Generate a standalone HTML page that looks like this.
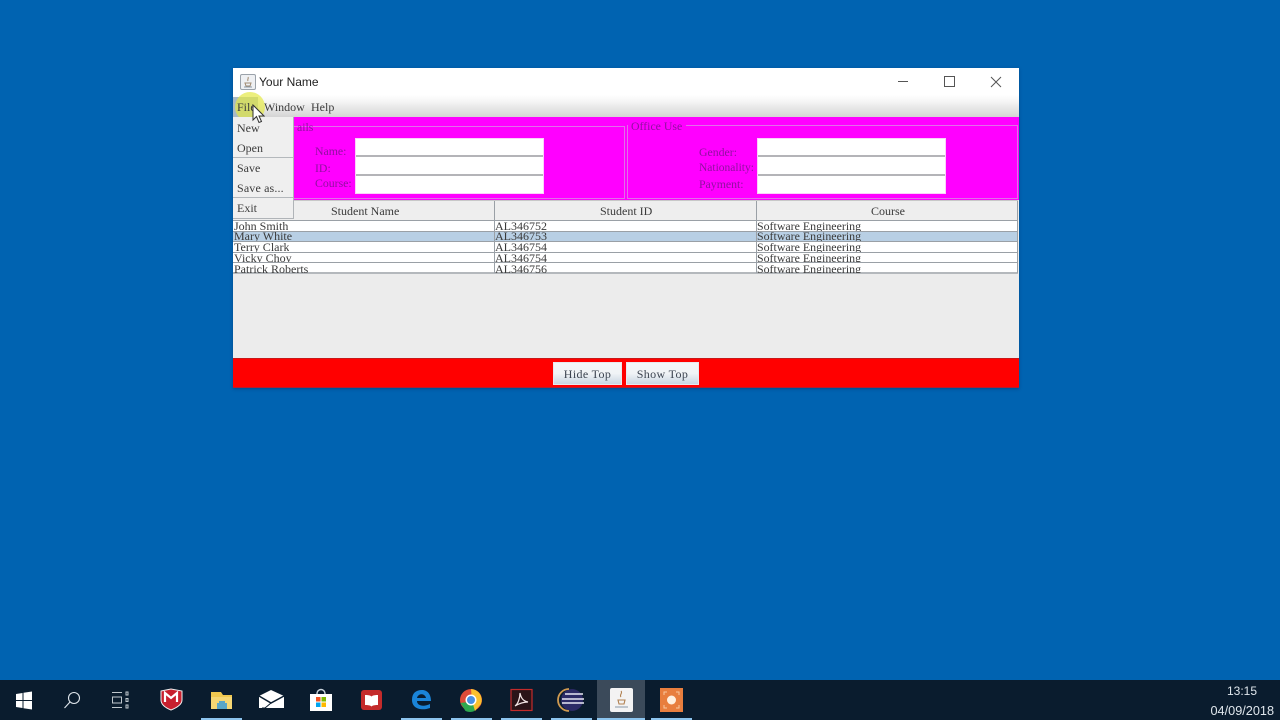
<!DOCTYPE html>
<html><head><meta charset="utf-8"><style>
html,body{margin:0;padding:0;width:1280px;height:720px;overflow:hidden;background:#0063b1}
div{position:absolute;box-sizing:border-box}
.t{font:12px/12px "Liberation Serif",serif;color:#3a3a3a;white-space:nowrap;filter:blur(.25px)}
.c{overflow:hidden}
.m{font:12px/12px "Liberation Serif",serif;color:#3c3c3c;white-space:nowrap;filter:blur(.25px)}
.p{color:#9010a0;font-size:11.800px}
.f{background:#fff;border:1px solid #fbd0fb}
.b{background:#b4b4b8;height:2px}
.r{height:1px;background:#9aa0a6}
.v{width:1px;background:#9aa0a6}
.btn{background:linear-gradient(#f4f6f8,#f0f3f6 50%,#c9d6e2);border:1px solid #e8e8ee;font:12px/22px "Liberation Serif",serif;color:#3c4450;text-align:center;letter-spacing:.35px;filter:blur(.2px)}
svg{position:absolute}
</style></head><body>
<div style="left:233px;top:68px;width:786px;height:320px;background:#ececec;box-shadow:0 1px 3px rgba(0,30,70,.35)"></div>
<div style="left:233px;top:68px;width:786px;height:49px;background:linear-gradient(#fff 0,#fff 27px,#f6f6f6 33px,#d4d4d4 49px)"></div>
<svg style="left:240px;top:74px" width="16" height="16" viewBox="0 0 16 16"><rect x=".5" y=".5" width="15" height="15" rx="1.500" fill="#eef0f3" stroke="#9aa2aa"/><path d="M8 3c1 1.500-1 2 0 4M5 9h6l-1 3H6z" fill="none" stroke="#a08a70"/><path d="M4 13h8" stroke="#8a9aaa"/></svg>
<div class="t" style="left:259px;top:76px;font:12px/13px 'Liberation Sans',sans-serif;color:#222">Your Name</div>
<svg style="left:890px;top:72px" width="120" height="20" viewBox="0 0 120 20" fill="none" stroke="#555" stroke-width="1"><path d="M8 9.500h10"/><rect x="54.500" y="4.500" width="10" height="10"/><path d="M101 5l10 10M111 5l-10 10"/></svg>
<div style="left:233px;top:97px;width:25px;height:20px;background:#a9bac6"></div>
<div style="left:235px;top:92px;width:30px;height:30px;border-radius:50%;background:rgba(228,232,70,.7)"></div>
<div class="m" style="left:237px;top:101px">File</div>
<div class="m" style="left:264px;top:101px">Window</div>
<div class="m" style="left:311px;top:101px">Help</div>

<div style="left:233px;top:117px;width:786px;height:83px;background:#ff00ff"></div>
<div style="left:233px;top:126px;width:392px;height:73px;border:1px solid #e070e8"></div>
<div style="left:627px;top:125px;width:391px;height:74px;border:1px solid #e070e8"></div>
<div style="left:628px;top:120px;width:58px;height:12px;background:#ff00ff"></div>
<div class="t p" style="left:631px;top:120px">Office Use</div>
<div class="t p" style="left:297px;top:121px">ails</div>
<div class="t p" style="left:315px;top:145px">Name:</div>
<div class="t p" style="left:315px;top:162px">ID:</div>
<div class="t p" style="left:315px;top:177px">Course:</div>
<div class="t p" style="left:699px;top:146px">Gender:</div>
<div class="t p" style="left:699px;top:162px;font-size:11.500px">Nationality:</div>
<div class="t p" style="left:699px;top:178px">Payment:</div>
<div class="f" style="left:355px;top:138px;width:189px;height:56px"></div>
<div class="b" style="left:356px;top:155px;width:187px"></div>
<div class="b" style="left:356px;top:174px;width:187px"></div>
<div class="f" style="left:757px;top:138px;width:189px;height:56px"></div>
<div class="b" style="left:758px;top:155px;width:187px"></div>
<div class="b" style="left:758px;top:174px;width:187px"></div>

<div style="left:233px;top:200px;width:785px;height:20px;background:#eeeeee;border-top:1px solid #c8c8c8"></div>
<div style="left:233px;top:220px;width:785px;height:53px;background:#fff"></div>
<div style="left:233px;top:231px;width:785px;height:10px;background:#b8cfe4"></div>
<div class="r" style="left:233px;top:220px;width:785px"></div>
<div class="r" style="left:233px;top:231px;width:785px"></div>
<div class="r" style="left:233px;top:241px;width:785px"></div>
<div class="r" style="left:233px;top:252px;width:785px"></div>
<div class="r" style="left:233px;top:262px;width:785px"></div>
<div class="r" style="left:233px;top:272px;width:785px;height:2px;background:#b4b8bc"></div>
<div class="v" style="left:494px;top:201px;height:72px"></div>
<div class="v" style="left:756px;top:201px;height:72px"></div>
<div class="v" style="left:1017px;top:201px;height:72px"></div>
<div class="t" style="left:331px;top:205px">Student Name</div>
<div class="t" style="left:600px;top:205px">Student ID</div>
<div class="t" style="left:871px;top:205px">Course</div>

<div class="t c" style="left:234px;top:220px;height:11px">John Smith</div>
<div class="t c" style="left:234px;top:230px;height:11px">Mary White</div>
<div class="t c" style="left:234px;top:241px;height:11px">Terry Clark</div>
<div class="t c" style="left:234px;top:252px;height:10px">Vicky Choy</div>
<div class="t c" style="left:234px;top:263px;height:10px">Patrick Roberts</div>
<div class="t c" style="left:495px;top:220px;height:11px">AL346752</div>
<div class="t c" style="left:495px;top:230px;height:11px">AL346753</div>
<div class="t c" style="left:495px;top:241px;height:11px">AL346754</div>
<div class="t c" style="left:495px;top:252px;height:10px">AL346754</div>
<div class="t c" style="left:495px;top:263px;height:10px">AL346756</div>
<div class="t c" style="left:757px;top:220px;height:11px;font-size:11.900px">Software Engineering</div>
<div class="t c" style="left:757px;top:230px;height:11px;font-size:11.900px">Software Engineering</div>
<div class="t c" style="left:757px;top:241px;height:11px;font-size:11.900px">Software Engineering</div>
<div class="t c" style="left:757px;top:252px;height:10px;font-size:11.900px">Software Engineering</div>
<div class="t c" style="left:757px;top:263px;height:10px;font-size:11.900px">Software Engineering</div>

<div style="left:233px;top:117px;width:61px;height:102px;background:#efefef;border-right:1px solid #b0b4b8;border-bottom:1px solid #b0b4b8"></div>
<div style="left:233px;top:157px;width:60px;height:1px;background:#b4b8bc"></div>
<div style="left:233px;top:197px;width:60px;height:1px;background:#b4b8bc"></div>
<div class="m" style="left:237px;top:122px">New</div>
<div class="m" style="left:237px;top:142px">Open</div>
<div class="m" style="left:237px;top:162px">Save</div>
<div class="m" style="left:237px;top:182px;letter-spacing:.15px">Save as...</div>
<div class="m" style="left:237px;top:202px">Exit</div>
<svg style="left:252px;top:104px" width="13" height="20" viewBox="0 0 13 20"><path d="M1 1v15l3.500-3.500 2.500 6 2.500-1-2.500-5.500h5z" fill="#fff" stroke="#333" stroke-width="1"/></svg>

<div style="left:233px;top:358px;width:786px;height:30px;background:#ff0000;border-top:1px solid #c81818;border-bottom:1px solid #b02030"></div>
<div class="btn" style="left:553px;top:362px;width:69px;height:23px">Hide Top</div>
<div class="btn" style="left:626px;top:362px;width:73px;height:23px">Show Top</div>

<div style="left:0;top:680px;width:1280px;height:40px;background:#0a1c2e"></div>
<div style="left:597px;top:680px;width:48px;height:40px;background:#3b4a5a"></div>
<div style="left:201px;top:718px;width:41px;height:2px;background:#8cc4ee"></div>
<div style="left:401px;top:718px;width:41px;height:2px;background:#8cc4ee"></div>
<div style="left:451px;top:718px;width:41px;height:2px;background:#8cc4ee"></div>
<div style="left:501px;top:718px;width:41px;height:2px;background:#8cc4ee"></div>
<div style="left:551px;top:718px;width:41px;height:2px;background:#8cc4ee"></div>
<div style="left:597px;top:718px;width:48px;height:2px;background:#8cc4ee"></div>
<div style="left:651px;top:718px;width:41px;height:2px;background:#8cc4ee"></div>

<svg style="left:0;top:680px" width="700" height="40" viewBox="0 680 700 40">
<path d="M16 694l6.500-1v7H16zM23.500 692.800l8.500-1.300v8.500h-8.500zM16 701h6.500v7l-6.500-1zM23.500 701H32v8.500l-8.500-1.300z" fill="#fff"/>
<circle cx="74" cy="698" r="5.500" fill="none" stroke="#dfe6ec" stroke-width="1.100"/><path d="M70 702l-5.500 6" stroke="#dfe6ec" stroke-width="1.100"/>
<path d="M112 692.500h10M112 707.500h10M112.500 697h9v6h-9zM126 692h2v3h-2zM126 698.500h2v3h-2zM126 705h2v3h-2z" fill="none" stroke="#c0c8ce" stroke-width="1"/>
<path d="M161 691l10-2 11 2v9c0 5-6 8-11 10-5-2-10-5-10-10z" fill="#c8202e" stroke="#f0f0f0"/><path d="M165 702v-9l6 5 6-5v9" fill="none" stroke="#fff" stroke-width="2.200"/>
<path d="M211 692h10l2 3h9v4h-21z" fill="#f0c850"/><path d="M211 697h21v12h-21z" fill="#f6d774"/><path d="M217 703h10v6h-10z" fill="#5aa6c8"/><path d="M219 701h6v2h-6z" fill="#5aa6c8"/>
<path d="M259 696l12-6 13 6v12h-25z" fill="#fff"/><path d="M259 696l12 7 13-7" fill="none" stroke="#0a1c2e" stroke-width="1.500"/><path d="M271 703l-6 5h-3" stroke="#0a1c2e" fill="none"/>
<path d="M310 694h22v17h-22z" fill="#fff"/><path d="M317 694c0-6 8-6 8 0" fill="none" stroke="#c9d4dc" stroke-width="1.400"/><path d="M316 697h4.500v4.500H316z" fill="#f25022"/><path d="M321.500 697h4.500v4.500h-4.500z" fill="#7fba00"/><path d="M316 702.500h4.500v4.500H316z" fill="#00a4ef"/><path d="M321.500 702.500h4.500v4.500h-4.500z" fill="#ffb900"/>
<rect x="361" y="690" width="21" height="20" rx="3" fill="#c42b2b"/><path d="M365 695c2 0 5 0 6.500 1.500 1.500-1.500 4.500-1.500 6.500-1.500v10c-2 0-5 0-6.500 1.500-1.500-1.500-4.500-1.500-6.500-1.500z" fill="#fff"/>
<path d="M412 700c0-7 4-10 10-10 6 0 9 5 9 11h-14c0 5 7 6 13 3v4c-8 3-18 1-18-8zm5-2h9c-1-5-8-5-9 0z" fill="#1a84d8"/>
<circle cx="471" cy="700" r="11" fill="#dd4b39"/><path d="M460.500 703l5 8a11 11 0 0 0 9 0l2-10z" fill="#2ea84f"/><path d="M471 689a11 11 0 0 1 10 15l-6 7-3-10z" fill="#fbc02d"/><circle cx="471" cy="700" r="5.500" fill="#fff"/><circle cx="471" cy="700" r="4" fill="#4a90e2"/>
<rect x="511" y="689.500" width="21" height="21" fill="#2a1418" stroke="#c42b2b" stroke-width="1.200"/><path d="M515 706c3-2 5-8 5-13 1 5 3 8 8 9-4 0-8 1-13 4z" fill="none" stroke="#f4e6e6" stroke-width="1.200"/>
<circle cx="572" cy="700" r="11" fill="#2c2a66"/><path d="M565 694h18M562 699h22M562 703h22" stroke="#e8e8f4" stroke-width="1.600"/><path d="M569 689a11 11 0 0 0 0 22" fill="none" stroke="#d09a50" stroke-width="1.800"/>
<rect x="610" y="688" width="23" height="24" rx="2" fill="#f3f3f3"/><path d="M621 691c2 2-2 4 0 6M618 700h7l-1 4h-5z" fill="none" stroke="#b08050" stroke-width="1.100"/><path d="M615 707h13" stroke="#8a9aaa"/>
<rect x="660" y="688" width="23" height="24" fill="#e87e3e"/><circle cx="671.500" cy="700" r="4.500" fill="#fff0e0"/><path d="M664 695v-3h3M679 695v-3h-3M664 705v3h3M679 705v3h-3" fill="none" stroke="#f8c8a0"/>
</svg>
<div style="left:1200px;top:683px;width:72px;text-align:right;font:12px/16px 'Liberation Sans',sans-serif;color:#dfe6ec"><span style="margin-right:15px">13:15</span></div>
<div style="left:1200px;top:703px;width:74px;text-align:right;font:12.700px/16px 'Liberation Sans',sans-serif;color:#dfe6ec">04/09/2018</div>
</body></html>
